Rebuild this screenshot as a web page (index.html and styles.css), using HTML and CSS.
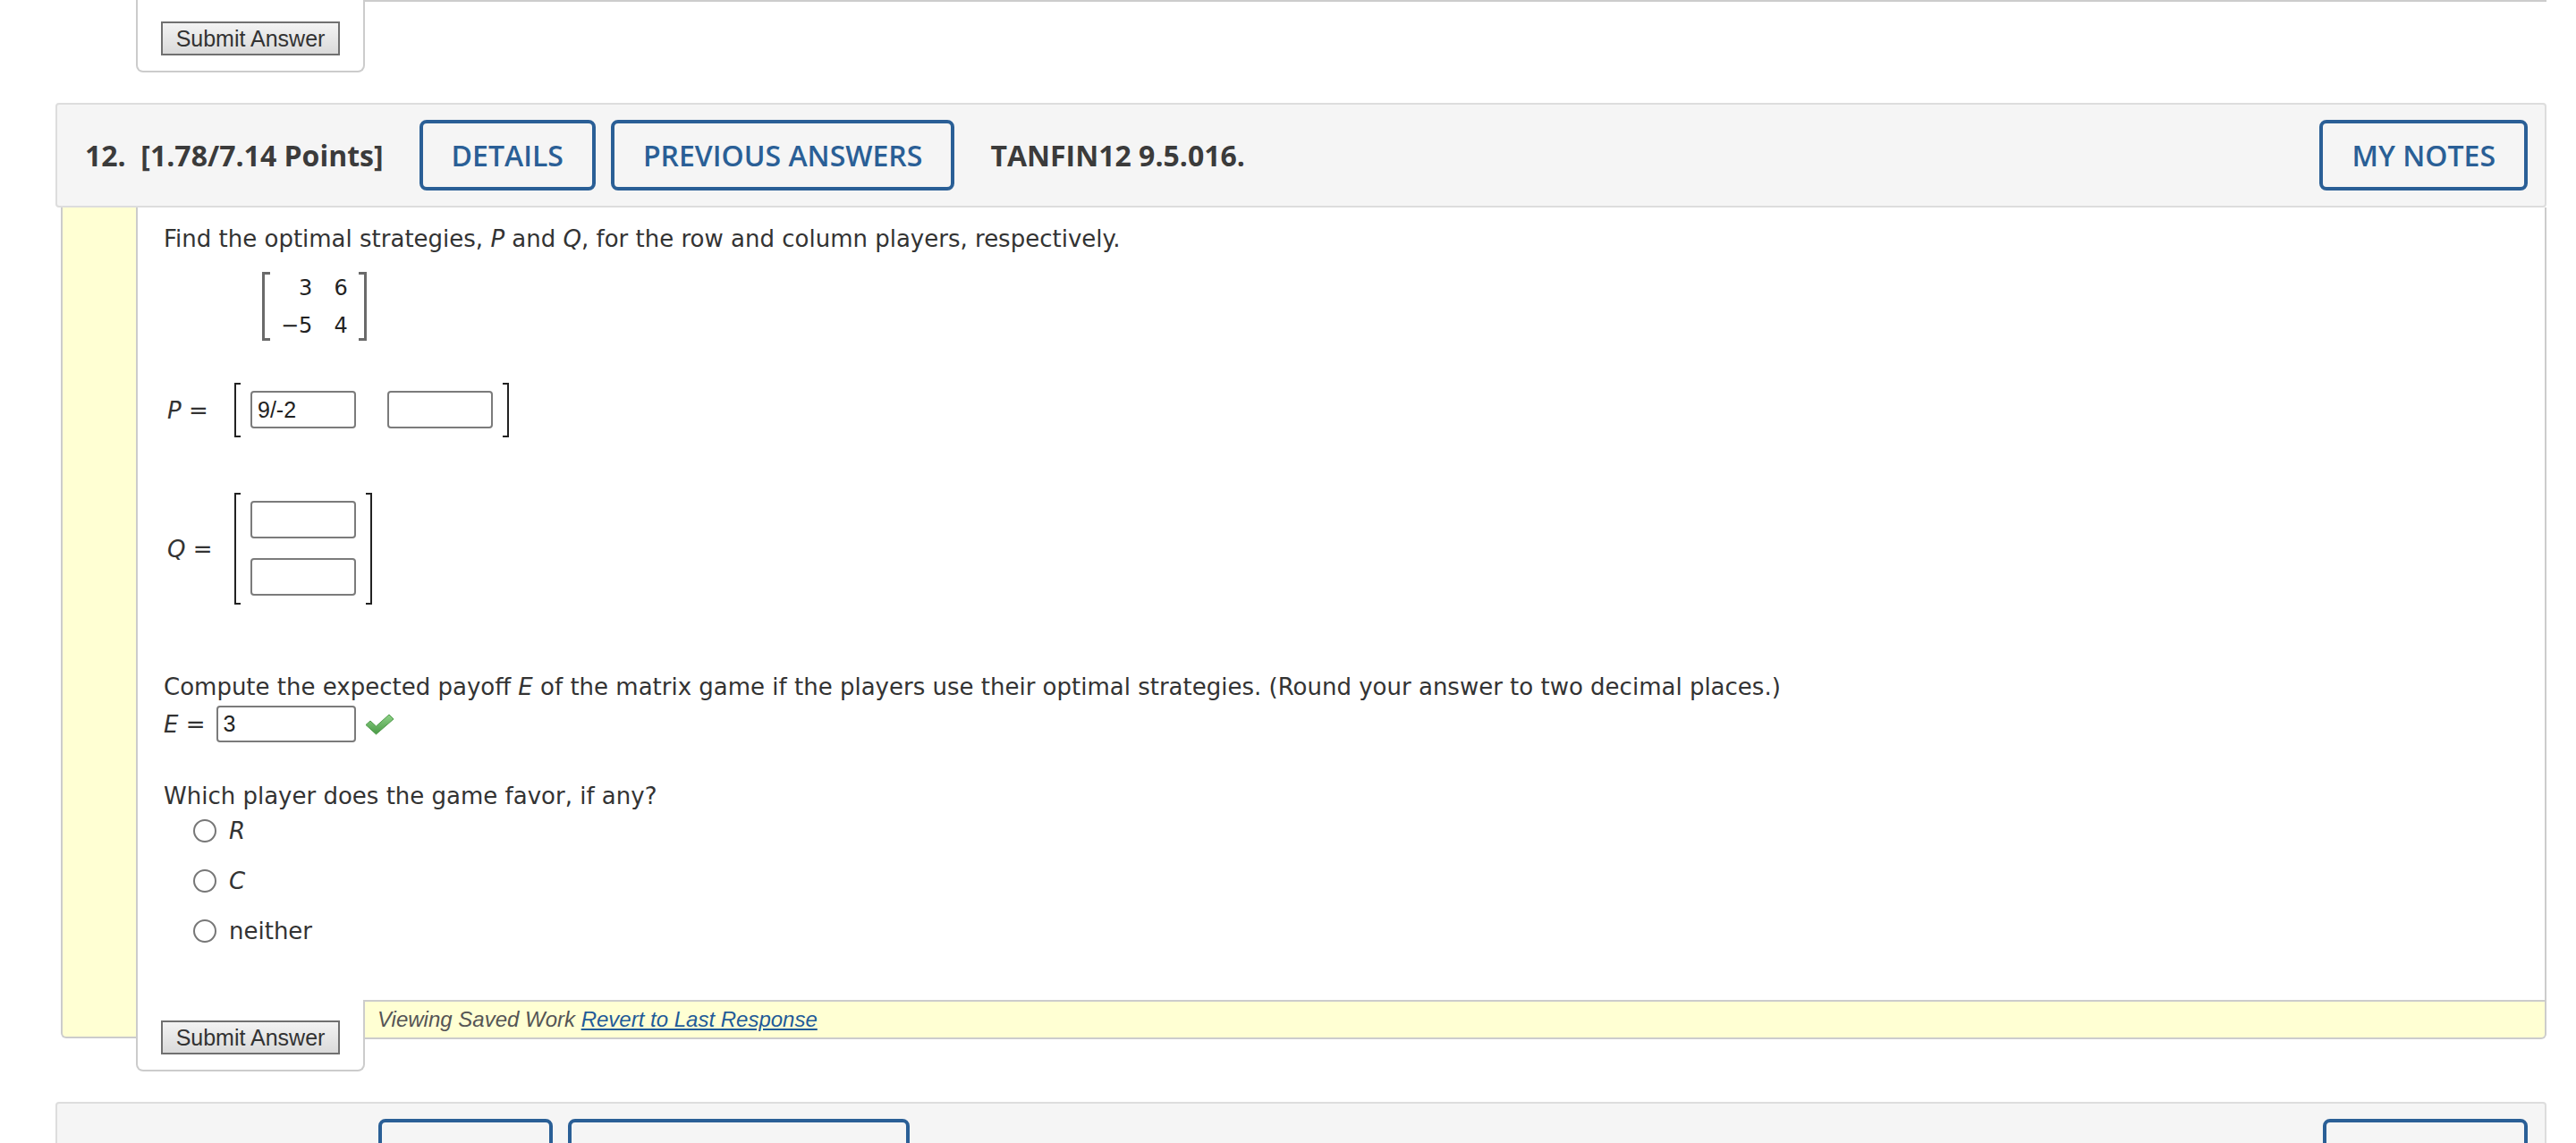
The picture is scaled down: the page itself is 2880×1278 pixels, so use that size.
FILE: index.html
```html
<!DOCTYPE html>
<html lang="en">
<head>
<meta charset="utf-8">
<title>Question 12</title>
<link rel="stylesheet" href="styles.css">
</head>
<body>
<div class="page">

  <section class="q q-prev">
    <div class="qbody">
      <div class="qstrip blank"></div>
      <div class="qmain">
        <div class="qfoot">
          <div class="tab tab-prev"><button class="submit" type="button">Submit Answer</button></div>
          <div class="endline"></div>
        </div>
      </div>
    </div>
  </section>

  <section class="q">
    <header class="qhead">
      <span class="qnum">12.&nbsp; [1.78/7.14 Points]</span>
      <button class="hbtn" type="button">DETAILS</button>
      <button class="hbtn" type="button">PREVIOUS ANSWERS</button>
      <span class="qid">TANFIN12 9.5.016.</span>
      <button class="hbtn notes" type="button">MY NOTES</button>
    </header>
    <div class="qbody">
      <div class="qstrip"></div>
      <div class="qmain">
        <div class="qcontent">
          <p class="line">Find the optimal strategies, <i>P</i> and <i>Q</i>, for the row and column players, respectively.</p>

          <div class="matrix">
            <span class="brk brk-l"></span>
            <div class="mcells">
              <span>3</span><span>6</span>
              <span>&minus;5</span><span>4</span>
            </div>
            <span class="brk brk-r"></span>
          </div>

          <div class="vrow vrow-p">
            <span class="vlabel"><i>P</i> =</span>
            <div class="vec">
              <span class="vbrk vbrk-l"></span>
              <div class="vcells vcells-row">
                <input class="ans" type="text" value="9/-2">
                <input class="ans" type="text" value="">
              </div>
              <span class="vbrk vbrk-r"></span>
            </div>
          </div>

          <div class="vrow vrow-q">
            <span class="vlabel"><i>Q</i> =</span>
            <div class="vec">
              <span class="vbrk vbrk-l"></span>
              <div class="vcells vcells-col">
                <input class="ans" type="text" value="">
                <input class="ans" type="text" value="">
              </div>
              <span class="vbrk vbrk-r"></span>
            </div>
          </div>

          <p class="line compute">Compute the expected payoff <i>E</i> of the matrix game if the players use their optimal strategies. (Round your answer to two decimal places.)</p>
          <div class="erow">
            <span class="elabel"><i>E</i> =</span>
            <input class="ans ans-wide" type="text" value="3">
            <svg class="check" width="33" height="24" viewBox="0 0 33 24" aria-hidden="true">
              <defs>
                <linearGradient id="chk" x1="0" y1="0" x2="0" y2="1">
                  <stop offset="0" stop-color="#8ed287"/>
                  <stop offset="1" stop-color="#4a9a46"/>
                </linearGradient>
              </defs>
              <path d="M1 12.5 L6 8 L12.5 14 L27 1 L32 6 L12.5 23 Z" fill="url(#chk)" stroke="#4f9a4a" stroke-width="1" stroke-linejoin="round"/>
            </svg>
          </div>

          <p class="line which">Which player does the game favor, if any?</p>
          <div class="options">
            <label class="opt"><input type="radio" name="favor"><i>R</i></label>
            <label class="opt"><input type="radio" name="favor"><i>C</i></label>
            <label class="opt"><input type="radio" name="favor">neither</label>
          </div>
        </div>
        <div class="qfoot">
          <div class="tab"><button class="submit" type="button">Submit Answer</button></div>
          <div class="saved">Viewing Saved Work <a href="#">Revert to Last Response</a></div>
        </div>
      </div>
    </div>
  </section>

  <section class="q">
    <header class="qhead qhead-next">
      <button class="hbtn w-details" type="button" aria-label="Details"></button>
      <button class="hbtn w-prev" type="button" aria-label="Previous answers"></button>
      <button class="hbtn notes w-notes" type="button" aria-label="My notes"></button>
    </header>
  </section>

</div>
</body>
</html>
```

FILE: styles.css
```css
html, body {
  margin: 0;
  padding: 0;
  background: #ffffff;
}
body {
  height: 1278px;
  overflow: hidden;
  font-family: Verdana, "DejaVu Sans", sans-serif;
  color: #333333;
}
.page {
  margin-left: 62px;
  width: 2785px;
}
.q + .q {
  margin-top: 34px;
}

/* header */
.qhead {
  display: flex;
  align-items: center;
  padding: 17px 19px 17px 31px;
  border: 2px solid #dddddd;
  border-radius: 4px;
  background: #f5f5f5;
  font-family: "Open Sans", sans-serif;
  font-size: 32px;
  color: #3b3b3b;
}
.qnum {
  font-weight: 700;
  margin-right: 40px;
  white-space: pre;
}
.hbtn {
  box-sizing: border-box;
  min-height: 79px;
  font-family: "Open Sans", sans-serif;
  font-size: 32px;
  font-weight: 600;
  line-height: 43px;
  color: #2a5f96;
  background: transparent;
  border: 4px solid #2a5f96;
  border-radius: 8px;
  padding: 14px 32px;
  margin: 0;
}
.hbtn + .hbtn {
  margin-left: 17px;
}
.qid {
  font-weight: 700;
  margin-left: 40px;
}
.hbtn.notes {
  margin-left: auto;
}
.qhead-next {
  padding-left: 359px;
}
.w-details {
  width: 195px;
}
.w-prev {
  width: 382px;
}
.w-notes {
  width: 229px;
}

/* body */
.qbody {
  display: flex;
  align-items: stretch;
  margin-left: 6px;
}
.qstrip {
  width: 82px;
  flex: none;
  background: #ffffd3;
  border-left: 2px solid #cccccc;
  border-bottom: 2px solid #cccccc;
  border-bottom-left-radius: 6px;
  margin-bottom: 37px;
}
.qstrip.blank {
  background: transparent;
  border-color: transparent;
}
.qmain {
  flex: 1;
  display: flex;
  flex-direction: column;
}
.qcontent {
  border-left: 2px solid #cccccc;
  border-right: 2px solid #cccccc;
  padding: 17px 28px 51px 29px;
  font-size: 26px;
}
.line {
  margin: 0;
  line-height: 36px;
}

/* matrix */
.matrix {
  display: flex;
  width: max-content;
  margin: 19px 0 0 110px;
  font-size: 24px;
  color: #222222;
}
.brk {
  width: 6px;
  border: 3px solid #6a6a6a;
}
.brk-l {
  border-right: none;
}
.brk-r {
  border-left: none;
}
.mcells {
  display: grid;
  grid-template-columns: auto auto;
  grid-auto-rows: 34px;
  row-gap: 8px;
  column-gap: 24px;
  justify-items: end;
  align-items: center;
  padding: 1px 12px 0 12px;
}

/* vectors */
.vrow {
  display: flex;
  align-items: center;
  padding-left: 4px;
}
.vrow-p {
  margin-top: 47px;
}
.vrow-q {
  margin-top: 62px;
}
.vlabel {
  width: 75px;
  flex: none;
  color: #333333;
}
.vec {
  display: flex;
}
.vbrk {
  width: 5px;
  border: 2px solid #222222;
}
.vbrk-l {
  border-right: none;
}
.vbrk-r {
  border-left: none;
}
.vcells {
  display: flex;
  padding: 9px 11px 10px 11px;
}
.vcells-row {
  gap: 35px;
}
.vcells-col {
  flex-direction: column;
  gap: 22px;
}
.ans {
  box-sizing: border-box;
  width: 118px;
  height: 42px;
  margin: 0;
  padding: 0 6px;
  border: 2px solid #7b7b7b;
  border-radius: 4px;
  background: #ffffff;
  font-family: "Liberation Sans", Arial, sans-serif;
  font-size: 25px;
  color: #222222;
}
.ans-wide {
  width: 156px;
  height: 41px;
}

/* expected payoff */
.compute {
  margin-top: 74px;
}
.erow {
  display: flex;
  align-items: center;
  gap: 12px;
  margin-top: 3px;
}
.check {
  margin-left: -2px;
}

/* options */
.which {
  margin-top: 47px;
  line-height: 26px;
}
.options {
  display: flex;
  flex-direction: column;
  gap: 4px;
  padding-left: 33px;
}
.opt {
  display: flex;
  align-items: center;
  gap: 14px;
  height: 52px;
}
.opt input {
  appearance: none;
  -webkit-appearance: none;
  box-sizing: border-box;
  width: 26px;
  height: 26px;
  margin: 0;
  border: 2px solid #777777;
  border-radius: 50%;
  background: #ffffff;
}

/* footer */
.qfoot {
  display: flex;
  align-items: flex-start;
}
.tab {
  flex: none;
  box-sizing: border-box;
  width: 256px;
  padding: 23px 26px 17px 26px;
  border-left: 2px solid #cccccc;
  border-right: 2px solid #cccccc;
  border-bottom: 2px solid #cccccc;
  border-radius: 0 0 8px 8px;
  background: #ffffff;
}
.tab-prev {
  padding-top: 24px;
}
.submit {
  box-sizing: border-box;
  width: 200px;
  height: 38px;
  margin: 0;
  padding: 0;
  font-family: "Liberation Sans", Arial, sans-serif;
  font-size: 25px;
  color: #333333;
  border: 2px solid #707070;
  border-radius: 0;
  background: linear-gradient(#f3f3f3, #dadada);
}
.saved {
  flex: 1;
  height: 40px;
  line-height: 40px;
  padding-left: 14px;
  border-top: 2px solid #cccccc;
  border-bottom: 2px solid #cccccc;
  border-right: 2px solid #cccccc;
  border-bottom-right-radius: 6px;
  background: #ffffd3;
  font-family: "Liberation Sans", Arial, sans-serif;
  font-style: italic;
  font-size: 24px;
  color: #555555;
}
.saved a {
  color: #1f5b98;
  text-decoration: underline;
}
.endline {
  flex: 1;
  height: 0;
  border-top: 2px solid #cccccc;
  border-right: 2px solid #cccccc;
}
```
